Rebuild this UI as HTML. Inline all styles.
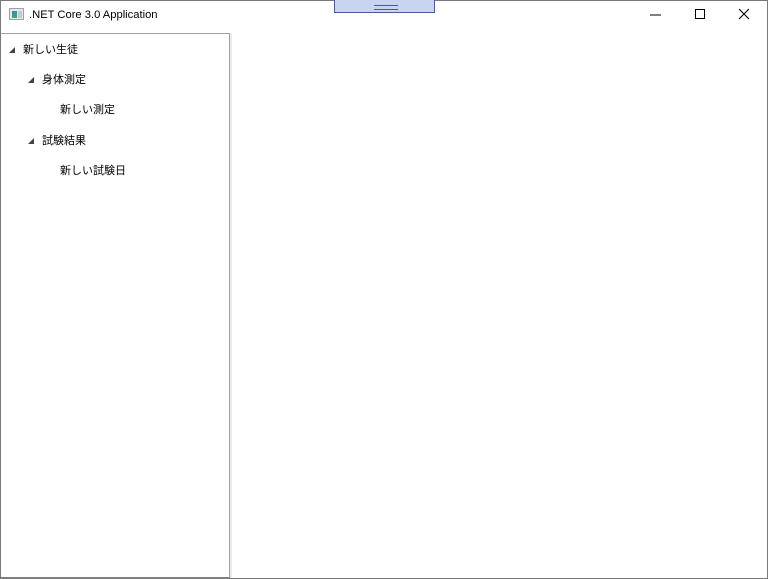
<!DOCTYPE html>
<html><head><meta charset="utf-8"><style>
*{margin:0;padding:0;box-sizing:border-box}
body{width:768px;height:579px;background:#fff;position:relative;overflow:hidden;font-family:"Liberation Sans","Noto Sans CJK JP",sans-serif;color:#000}
.win{position:absolute;left:0;top:0;width:768px;height:579px;border:1px solid #7a7a7a}
.title{position:absolute;left:29px;top:9px;font-size:11.2px;color:#000}
.icon{position:absolute;left:9px;top:8px;width:15px;height:12px;border:1px solid #a0a0a0;background:#e8e8e8}
.icon i{position:absolute;left:2px;top:2px;width:5px;height:7px;background:linear-gradient(#3a8fb0,#3aa870)}
.icon b{position:absolute;left:8px;top:2px;width:4px;height:7px;background:#bcd}
.handle{position:absolute;left:334px;top:0;width:101px;height:13px;background:#c9d5f0;border:1px solid #4b5a96;border-top:none}
.handle:after{content:"";position:absolute;left:39px;top:5px;width:24px;height:3px;border-top:1px solid #4b5a96;border-bottom:1px solid #4b5a96}
.panel{position:absolute;left:1px;top:33px;width:229px;height:545px;border-top:1px solid #a0a0a0;border-right:1px solid #a0a0a0;border-bottom:1px solid #828282}
.split{position:absolute;left:230px;top:33px;width:2px;height:545px;background:#eaeaea}
.t{position:absolute;font-size:11px;color:#000;font-family:"Liberation Sans","Noto Sans CJK JP",sans-serif}
.tri{position:absolute;width:0;height:0;border-left:6px solid transparent;border-bottom:6px solid #444}
</style></head><body>
<div class="win"></div>
<div class="icon"><i></i><b></b></div>
<div class="title">.NET Core 3.0 Application</div>
<div class="handle"></div>
<svg style="position:absolute;left:640px;top:6px" width="120" height="18">
<line x1="10" y1="9" x2="21" y2="9" stroke="#000" stroke-width="1"/>
<rect x="55.5" y="3.5" width="9" height="9" fill="none" stroke="#000"/>
<path d="M99 3L109 13M109 3L99 13" stroke="#000" stroke-width="1.1"/>
</svg>
<div class="panel"></div>
<div class="split"></div>
<div class="tri" style="left:9px;top:47px"></div>
<div class="t" style="left:23px;top:41px">新しい生徒</div>
<div class="tri" style="left:28px;top:77px"></div>
<div class="t" style="left:42px;top:71px">身体測定</div>
<div class="t" style="left:60px;top:101px">新しい測定</div>
<div class="tri" style="left:28px;top:138px"></div>
<div class="t" style="left:42px;top:132px">試験結果</div>
<div class="t" style="left:60px;top:162px">新しい試験日</div>
</body></html>
